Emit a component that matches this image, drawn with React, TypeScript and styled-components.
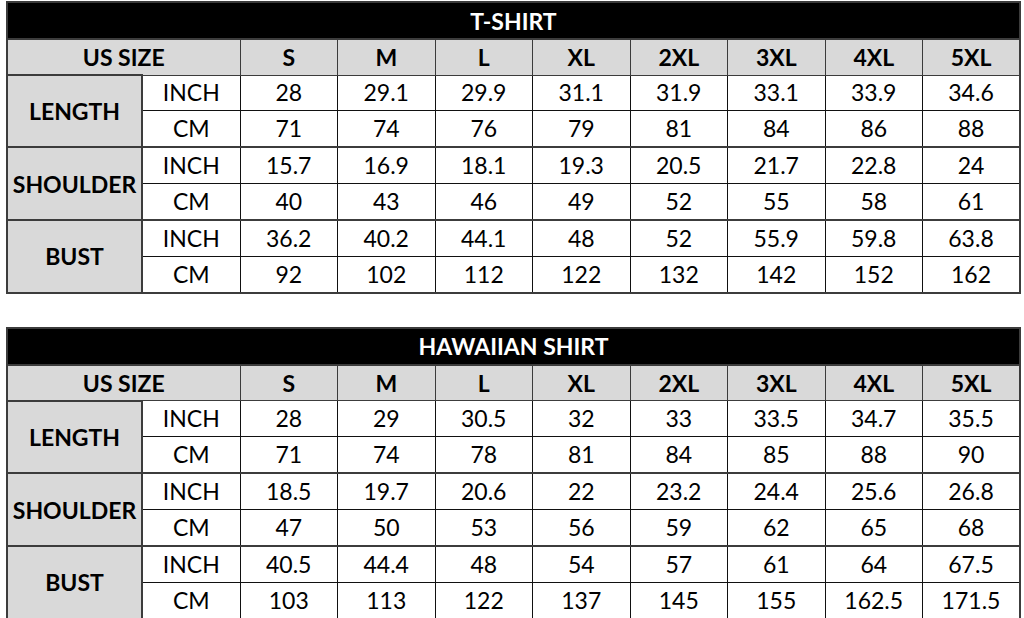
import React from "react";
import styled, { createGlobalStyle } from "styled-components";

const Global = createGlobalStyle`
  html, body { margin: 0; padding: 0; background: #fff; }
  body { font-family: Lato, "Open Sans", sans-serif; }
`;

const Page = styled.div`
  display: flex;
  flex-direction: column;
  gap: 33px;
  padding: 1px 0 0 6px;
  width: 1014px;
`;

const Table = styled.table`
  border-collapse: collapse;
  table-layout: fixed;
  width: 1013px;
  border: 2px solid #3c3c3c;
  font-family: Lato, "Open Sans", sans-serif;
  color: #000;
`;

const TitleCell = styled.th`
  background: #000;
  color: #fff;
  font-weight: 700;
  font-size: 23px;
  height: 35px;
  padding: 0;
  text-align: center;
  border: 2px solid #3c3c3c;
`;

const HeadCell = styled.th`
  background: #d9d9d9;
  font-weight: 700;
  font-size: 23px;
  height: 34px;
  padding: 0;
  text-align: center;
  border: 1px solid #3c3c3c;
`;

const GroupCell = styled.th`
  background: #d9d9d9;
  font-weight: 700;
  font-size: 23px;
  padding: 0;
  text-align: center;
  border: 2px solid #3c3c3c;
`;

const Cell = styled.td<{ $groupEnd?: boolean }>`
  font-size: 23px;
  font-weight: 400;
  height: 34.9px;
  padding: 0;
  line-height: 1;
  text-align: center;
  border-left: 1px solid #111;
  border-right: 1px solid #111;
  border-top: 1px solid #111;
  border-bottom: ${(p) => (p.$groupEnd ? "2px solid #3c3c3c" : "1px solid #111")};
`;

type Group = { name: string; inch: string[]; cm: string[] };
type Chart = { title: string; groups: Group[] };

const sizes = ["S", "M", "L", "XL", "2XL", "3XL", "4XL", "5XL"];

const charts: Chart[] = [
  {
    title: "T-SHIRT",
    groups: [
      { name: "LENGTH", inch: ["28", "29.1", "29.9", "31.1", "31.9", "33.1", "33.9", "34.6"], cm: ["71", "74", "76", "79", "81", "84", "86", "88"] },
      { name: "SHOULDER", inch: ["15.7", "16.9", "18.1", "19.3", "20.5", "21.7", "22.8", "24"], cm: ["40", "43", "46", "49", "52", "55", "58", "61"] },
      { name: "BUST", inch: ["36.2", "40.2", "44.1", "48", "52", "55.9", "59.8", "63.8"], cm: ["92", "102", "112", "122", "132", "142", "152", "162"] },
    ],
  },
  {
    title: "HAWAIIAN SHIRT",
    groups: [
      { name: "LENGTH", inch: ["28", "29", "30.5", "32", "33", "33.5", "34.7", "35.5"], cm: ["71", "74", "78", "81", "84", "85", "88", "90"] },
      { name: "SHOULDER", inch: ["18.5", "19.7", "20.6", "22", "23.2", "24.4", "25.6", "26.8"], cm: ["47", "50", "53", "56", "59", "62", "65", "68"] },
      { name: "BUST", inch: ["40.5", "44.4", "48", "54", "57", "61", "64", "67.5"], cm: ["103", "113", "122", "137", "145", "155", "162.5", "171.5"] },
    ],
  },
];

function SizeTable({ chart }: { chart: Chart }) {
  return (
    <Table>
      <colgroup>
        <col style={{ width: 135 }} />
        <col style={{ width: 98 }} />
        {sizes.map((s) => (
          <col key={s} style={{ width: 97.5 }} />
        ))}
      </colgroup>
      <thead>
        <tr>
          <TitleCell colSpan={10}>{chart.title}</TitleCell>
        </tr>
        <tr>
          <HeadCell colSpan={2}>US SIZE</HeadCell>
          {sizes.map((s) => (
            <HeadCell key={s}>{s}</HeadCell>
          ))}
        </tr>
      </thead>
      <tbody>
        {chart.groups.map((g) => (
          <React.Fragment key={g.name}>
            <tr>
              <GroupCell rowSpan={2}>{g.name}</GroupCell>
              <Cell>INCH</Cell>
              {g.inch.map((v, i) => (
                <Cell key={i}>{v}</Cell>
              ))}
            </tr>
            <tr>
              <Cell $groupEnd>CM</Cell>
              {g.cm.map((v, i) => (
                <Cell key={i} $groupEnd>{v}</Cell>
              ))}
            </tr>
          </React.Fragment>
        ))}
      </tbody>
    </Table>
  );
}

export default function App() {
  return (
    <>
      <Global />
      <Page>
        {charts.map((c) => (
          <SizeTable key={c.title} chart={c} />
        ))}
      </Page>
    </>
  );
}
